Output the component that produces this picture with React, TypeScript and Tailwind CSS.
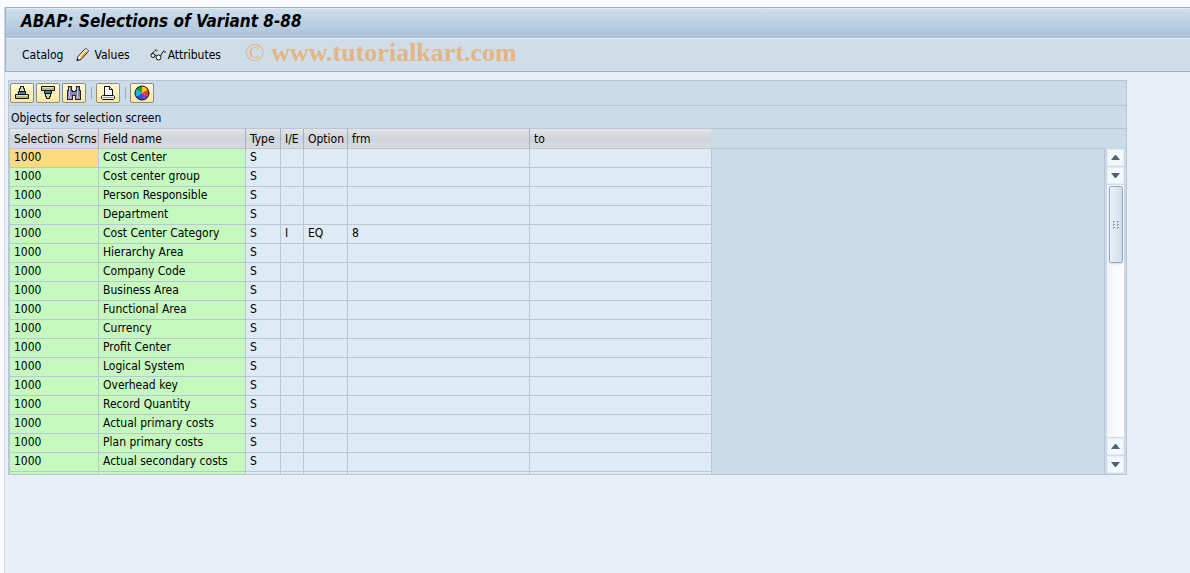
import React from 'react';

const FIELDS = [
    { name: 'Cost Center' },
    { name: 'Cost center group' },
    { name: 'Person Responsible' },
    { name: 'Department' },
    { name: 'Cost Center Category', sign: 'I', option: 'EQ', from: '8' },
    { name: 'Hierarchy Area' },
    { name: 'Company Code' },
    { name: 'Business Area' },
    { name: 'Functional Area' },
    { name: 'Currency' },
    { name: 'Profit Center' },
    { name: 'Logical System' },
    { name: 'Overhead key' },
    { name: 'Record Quantity' },
    { name: 'Actual primary costs' },
    { name: 'Plan primary costs' },
    { name: 'Actual secondary costs' },
];

const COLUMNS = ['Selection Scrns', 'Field name', 'Type', 'I/E', 'Option', 'frm', 'to'];

const PencilIcon = () => (
    <svg className="w-4 h-4" viewBox="0 0 16 16">
        <path d="M2 13.500l1-4L9.500 2.500l2-1 2 2-1 2-6.500 7z" fill="#fff" stroke="#111" />
        <path d="M4 9.500l6-6.500 1 1-6 6.500z" fill="#ffe9a0" />
        <path d="M5 11l6-7 1.200 1.200-6 6.500z" fill="#f59a1c" />
        <path d="M10 2.500l1.500-1 2 2-1 1.500z" fill="#c3cbe8" />
        <path d="M1.500 14l.8-2.500 1.700 1.500z" fill="#111" />
    </svg>
);

const GlassesIcon = () => (
    <svg className="w-4 h-4" viewBox="0 0 16 16" fill="none" stroke="#111">
        <path d="M1 8.500q0-2 2-2t2 2-2 2-2-2z" fill="#eef4fa" />
        <path d="M6 10.500q0-2.500 2.500-2.500t2.500 2.500T8.500 13 6 10.500z" fill="#eef4fa" />
        <path d="M1 7.500L5 3.500q1.500-1.500 2 0v1M5 8.500q1-.5 1.500.5M10.500 9l2.500-4.500q1.500-1.500 2 0v1.500" />
    </svg>
);

const SortAscIcon = () => (
    <svg className="w-4 h-4" viewBox="0 0 16 16">
        <path d="M6.500 1.500h3v2h1v3h-5v-3h1z" fill="#d3dba0" stroke="#111" />
        <path d="M4.500 6.500h7v3h-7z" fill="#3b82b8" stroke="#111" />
        <path d="M1.500 9.500h13v4h-13z" fill="#b5be74" stroke="#111" />
        <path d="M2 10h12v1H2z" fill="#dbe2ae" />
    </svg>
);

const SortDescIcon = () => (
    <svg className="w-4 h-4" viewBox="0 0 16 16">
        <path d="M1.500 1.500h13v4h-13z" fill="#b5be74" stroke="#111" />
        <path d="M2 2h12v1H2z" fill="#dbe2ae" />
        <path d="M4.500 5.500h7v3h-7z" fill="#3b82b8" stroke="#111" />
        <path d="M5.500 8.500h5v3h-1v2h-3v-2h-1z" fill="#d3dba0" stroke="#111" />
    </svg>
);

const BinocularsIcon = () => (
    <svg className="w-4 h-4" viewBox="0 0 16 16" shapeRendering="crispEdges">
        <path d="M2 1h4v4h1v1h2V5h1V1h4v4h1v10H9v-4H7v4H1V5h1z" fill="#22223a" />
        <path d="M3 2h2v4H3zM2 6h4v5H2zM11 2h2v4h-2zM10 6h4v5h-4zM6 7h4v3H6z" fill="#8585b0" />
        <path d="M2 11h4v3H2zM10 11h4v3h-4z" fill="#9c9cc4" />
        <path d="M3 3h1v10H3zM11 3h1v10h-1z" fill="#c6c6de" />
    </svg>
);

const PrinterIcon = () => (
    <svg className="w-4 h-4" viewBox="0 0 16 16">
        <path d="M4.500 10.500v-9h5l3 3v6z" fill="#fff" stroke="#111" />
        <path d="M9.500 1.500v3h3" fill="#cfd8e6" stroke="#111" />
        <path d="M3.500 10.500h-1l-1 1v2l1 1h11l1-1v-2l-1-1z" fill="#f2f2ea" stroke="#111" />
        <path d="M3 12.500h10" stroke="#8a97a8" />
    </svg>
);

const PaletteIcon = () => (
    <svg className="w-4 h-4" viewBox="0 0 16 16">
        <path d="M8 8V1a7 7 0 0 1 6 3.500z" fill="#f9c81c" />
        <path d="M8 8l6-3.500a7 7 0 0 1 0 7z" fill="#ef3a1a" />
        <path d="M8 8l6 3.500A7 7 0 0 1 8 15z" fill="#7a3fc4" />
        <path d="M8 8v7a7 7 0 0 1-6-3.500z" fill="#2456e0" />
        <path d="M8 8l-6 3.500a7 7 0 0 1 0-7z" fill="#22b0e0" />
        <path d="M8 8L2 4.500A7 7 0 0 1 8 1z" fill="#18a03a" />
        <circle cx="8" cy="8" r="7" fill="none" stroke="#111" />
    </svg>
);

const ToolButton = ({ label, children }: { label: string; children: React.ReactNode }) => (
    <button
        aria-label={label}
        className="flex h-5 w-6 items-center justify-center rounded-xs border border-[#8f8c80] bg-linear-to-b from-[#fff9d8] to-[#f9e7a0]"
    >
        {children}
    </button>
);

const Separator = () => <span className="ml-[3px] mr-0.5 h-3 w-px bg-[#9fabb8]" />;

const ScrollButton = ({ label, up }: { label: string; up?: boolean }) => (
    <button
        aria-label={label}
        className="flex h-[17px] w-full shrink-0 items-center justify-center border border-[#e6edf5] bg-[#f4f7fc]"
    >
        <svg className="h-[5px] w-[9px]" viewBox="0 0 9 5">
            <path d={up ? 'M0 5L4 0h1l4 5z' : 'M0 0h9L5 5H4z'} fill="#4f6270" />
        </svg>
    </button>
);

const TitleBar = () => (
    <header className="border-y border-l border-[#9fb0c4] bg-[#cfdde9]">
        <div className="flex h-[31px] items-center border-b border-t border-b-[#e9f0f6] border-t-[#e2ecf4] bg-linear-to-b from-[#cddeeb] to-[#a9c1da] pb-1 pl-[15px]">
            <h1 className="font-['DejaVu_Sans_Condensed','Noto_Sans',sans-serif] text-[17px] font-bold italic">
                ABAP: Selections of Variant 8-88
            </h1>
        </div>
        <div className="flex h-8 items-center pl-4">
            <button>Catalog</button>
            <button className="ml-3 flex items-center gap-[3px]">
                <PencilIcon />
                Values
            </button>
            <button className="ml-5 flex items-center gap-0.5">
                <GlassesIcon />
                Attributes
            </button>
            <p className="ml-6 pb-1 font-['Liberation_Serif',serif] text-[26px] leading-7 text-[#e5b583]">
                © <b>www.tutorialkart.com</b>
            </p>
        </div>
    </header>
);

const SelectionTable = () => (
    <table className="w-[702px] table-fixed border-separate border-spacing-0">
        <colgroup>
            <col className="w-[89px]" />
            <col className="w-[147px]" />
            <col className="w-[35px]" />
            <col className="w-[23px]" />
            <col className="w-[44px]" />
            <col className="w-[182px]" />
            <col className="w-[182px]" />
        </colgroup>
        <thead>
            <tr className="h-5">
                {COLUMNS.map((column) => (
                    <th
                        key={column}
                        className="overflow-hidden border-b border-r border-b-[#b5c3d3] border-r-[#a7b1bc] bg-linear-to-b from-[#e3e6e8] via-[#d0d5da] to-[#d9dcdf] p-0 pt-0.5 pl-1 text-left font-normal leading-[17px] whitespace-nowrap last:border-r-[#d3d9df]"
                    >
                        {column}
                    </th>
                ))}
            </tr>
        </thead>
        <tbody className="[&_td]:h-[19px] [&_td]:border-b [&_td]:border-r [&_td]:border-[#b9c6d6] [&_td]:p-0 [&_td]:pb-0.5 [&_td]:pl-1 [&_td]:leading-4 [&_td]:whitespace-nowrap">
            {FIELDS.map((field, i) => (
                <tr key={field.name} className="bg-[#deebf5]">
                    <td className={i === 0 ? 'bg-[#ffdb80]' : 'bg-[#c5f9c0]'}>1000</td>
                    <td className="bg-[#c5f9c0]">{field.name}</td>
                    <td>S</td>
                    <td>{field.sign}</td>
                    <td>{field.option}</td>
                    <td>{field.from}</td>
                    <td />
                </tr>
            ))}
            {/* next row, cut off by the viewport */}
            <tr className="bg-[#deebf5]">
                <td className="bg-[#c5f9c0]" />
                <td className="bg-[#c5f9c0]" />
                <td />
                <td />
                <td />
                <td />
                <td />
            </tr>
        </tbody>
    </table>
);

const ScrollBar = () => (
    <div className="flex w-[17px] flex-col gap-px py-px">
        <ScrollButton label="Page up" up />
        <ScrollButton label="Line down" />
        <div className="flex-1 bg-linear-to-r from-[#f1f4f8] to-white pt-px pr-px pl-0.5">
            <div className="flex h-[77px] items-center justify-center rounded-xs border border-[#93a9ba] bg-linear-to-r from-[#ebf2f8] to-[#cfdfea] shadow-sm">
                <div className="grid grid-cols-2 gap-x-0.5 gap-y-px">
                    {[0, 1, 2, 3, 4, 5].map((dot) => (
                        <span key={dot} className="h-0.5 w-0.5 border-l border-t border-[#8ba0b0] bg-white" />
                    ))}
                </div>
            </div>
        </div>
        <ScrollButton label="Line up" up />
        <ScrollButton label="Page down" />
    </div>
);

export default function App() {
    return (
        <div className="min-h-screen bg-[#fafbfe] pl-1 pt-[7px] font-['DejaVu_Sans_Condensed','Noto_Sans',sans-serif] text-[12px] text-black">
            <div className="flex min-h-[calc(100vh-7px)] flex-col border-l border-[#d0d9e6] bg-[#e8eff7]">
                <TitleBar />
                <main className="mr-[63px] ml-[3px] mt-2 border border-[#b9c6d6] bg-[#cbdbea]">
                    <div className="flex h-[25px] items-center gap-0.5 border-b border-[#b9c6d6] pl-px">
                        <ToolButton label="Sort ascending"><SortAscIcon /></ToolButton>
                        <ToolButton label="Sort descending"><SortDescIcon /></ToolButton>
                        <ToolButton label="Find"><BinocularsIcon /></ToolButton>
                        <Separator />
                        <ToolButton label="Print"><PrinterIcon /></ToolButton>
                        <Separator />
                        <ToolButton label="Colors"><PaletteIcon /></ToolButton>
                    </div>
                    <h2 className="h-[23px] border-b border-[#b9c6d6] pt-px pl-0.5 leading-[22px]">Objects for selection screen</h2>
                    <div className="flex h-[345px] border-l border-[#b9c6d6]">
                        <div className="h-full shrink-0 overflow-hidden">
                            <SelectionTable />
                        </div>
                        <div className="mt-[19px] flex-1 border-t border-[#b9c6d6]" />
                        <div className="mt-[19px] flex gap-0.5 pr-0.5">
                            <span className="w-px bg-[#b9c6d6]" />
                            <ScrollBar />
                        </div>
                    </div>
                </main>
            </div>
        </div>
    );
}
